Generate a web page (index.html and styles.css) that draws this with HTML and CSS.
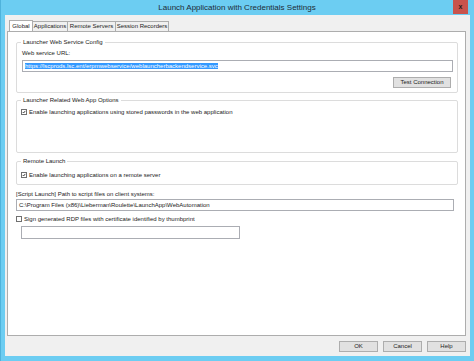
FILE: index.html
```html
<!DOCTYPE html>
<html>
<head>
    <title>Launch Application with Credentials Settings</title>
    <link rel="stylesheet" href="styles.css">
</head>
<body>
    <div class="window">
        <div class="titlebar">
            <div class="title">Launch Application with Credentials Settings</div>
            <div class="close">x</div>
        </div>
        <div class="client">
            <div class="tabs">
                <div class="tab active">Global</div>
                <div class="tab">Applications</div>
                <div class="tab">Remote Servers</div>
                <div class="tab">Session Recorders</div>
            </div>
            <div class="panel">
                <fieldset class="group group-service">
                    <legend>Launcher Web Service Config</legend>
                    <div class="label">Web service URL:</div>
                    <div class="textbox url"><span class="selected">https://lscprods.lsc.ent/erpmwebservice/weblauncherbackendservice.svc</span></div>
                    <div class="btn-row">
                        <div class="button test">Test Connection</div>
                    </div>
                </fieldset>

                <fieldset class="group group-webapp">
                    <legend>Launcher Related Web App Options</legend>
                    <div class="check-row">
                        <span class="checkbox checked"><svg viewBox="0 0 8 8"><path d="M1.5 4.2 L3.2 6 L6.6 1.8" /></svg></span>
                        Enable launching applications using stored passwords in the web application
                    </div>
                </fieldset>

                <fieldset class="group group-remote">
                    <legend>Remote Launch</legend>
                    <div class="check-row">
                        <span class="checkbox checked"><svg viewBox="0 0 8 8"><path d="M1.5 4.2 L3.2 6 L6.6 1.8" /></svg></span>
                        Enable launching applications on a remote server
                    </div>
                </fieldset>

                <div class="label script-label">[Script Launch] Path to script files on client systems:</div>
                <div class="textbox path">C:\Program Files (x86)\Lieberman\Roulette\LaunchApp\WebAutomation</div>
                <div class="check-row rdp-row">
                    <span class="checkbox"></span>
                    Sign generated RDP files with certificate identified by thumbprint
                </div>
                <div class="textbox thumb"></div>
            </div>
            <div class="footer">
                <div class="button">OK</div>
                <div class="button">Cancel</div>
                <div class="button">Help</div>
            </div>
        </div>
    </div>
</body>
</html>
```

FILE: styles.css
```css
body {
    margin: 0;
    padding: 0;
    font-family: "Liberation Sans", Arial, sans-serif;
    font-size: 6px;
    color: #222;
}

.window {
    width: 474px;
    height: 361px;
    display: flex;
    flex-direction: column;
    background: #6ccdf2;
    box-sizing: border-box;
    border-left: 1px solid #4fb3dc;
}

.titlebar {
    height: 15px;
    display: flex;
    align-items: flex-start;
}

.title {
    flex: 1;
    text-align: center;
    font-size: 8px;
    line-height: 15px;
    color: #1d2c36;
    padding-left: 20px;
}

.close {
    width: 15px;
    height: 14px;
    margin-right: 6px;
    background: #c9534c;
    color: #2a1a1a;
    font-weight: bold;
    font-size: 7px;
    line-height: 13px;
    text-align: center;
}

.client {
    flex: 1;
    margin: 0 4px 5px 4px;
    background: #f0f0f0;
    display: flex;
    flex-direction: column;
    padding: 6px 4px 0 2px;
}

.tabs {
    display: flex;
    height: 10px;
    padding-left: 2px;
}

.tab {
    height: 10px;
    box-sizing: border-box;
    border: 1px solid #adadad;
    border-bottom: none;
    margin-right: -1px;
    padding: 0;
    line-height: 9px;
    text-align: center;
    white-space: nowrap;
    background: #f0f0f0;
}

.tab.active {
    background: #fff;
    height: 11px;
    margin-top: -1px;
    margin-bottom: -1px;
    position: relative;
    z-index: 1;
    width: 24px;
    line-height: 10px;
}

.tab:nth-child(2) { width: 36px; }
.tab:nth-child(3) { width: 49px; }
.tab:nth-child(4) { width: 54px; }

.panel {
    height: 305px;
    box-sizing: border-box;
    border: 1px solid #adadad;
    background: #fff;
    padding: 6px 7px 0 8px;
}

.group {
    margin: 0;
    border: 1px solid #dcdcdc;
    border-radius: 2px;
    padding: 0 4px;
}

.group legend {
    padding: 0 2px;
    margin-left: 0;
    line-height: 8px;
}

.label {
    line-height: 8px;
}

.group-service {
    padding-bottom: 4px;
}

.group-service .label {
    margin-top: 3px;
    padding-left: 1px;
}

.textbox {
    height: 12px;
    box-sizing: border-box;
    border: 1px solid #abadb3;
    background: #fff;
    line-height: 10px;
    padding-left: 2px;
    white-space: nowrap;
    overflow: hidden;
}

.url {
    margin-top: 3px;
    margin-left: 1px;
}

.selected {
    background: #3399ff;
    color: #fff;
}

.btn-row {
    display: flex;
    justify-content: flex-end;
    margin-top: 5px;
    padding-right: 2px;
}

.button {
    height: 11px;
    box-sizing: border-box;
    border: 1px solid #adadad;
    background: #e1e1e1;
    line-height: 9px;
    text-align: center;
    width: 39px;
}

.button.test {
    width: 58px;
}

.group-webapp {
    margin-top: 3px;
    padding-bottom: 36px;
}

.group-webapp .check-row {
    margin-top: 4px;
}

.group-remote {
    margin-top: 4px;
    padding-bottom: 5px;
}

.group-remote .check-row {
    margin-top: 6px;
}

.check-row {
    display: flex;
    align-items: center;
    gap: 2px;
    line-height: 8px;
}

.checkbox {
    width: 6px;
    height: 6px;
    box-sizing: border-box;
    border: 1px solid #707070;
    background: #fff;
    display: flex;
}

.checkbox svg {
    width: 100%;
    height: 100%;
    fill: none;
    stroke: #1a1a1a;
    stroke-width: 1.6;
}

.script-label {
    margin-top: 5px;
}

.path {
    margin-top: 1px;
    width: 438px;
}

.rdp-row {
    margin-top: 4px;
}

.thumb {
    margin-top: 3px;
    margin-left: 5px;
    width: 219px;
    height: 13px;
}

.footer {
    display: flex;
    justify-content: flex-end;
    gap: 5px;
    margin-top: 5px;
}
```
